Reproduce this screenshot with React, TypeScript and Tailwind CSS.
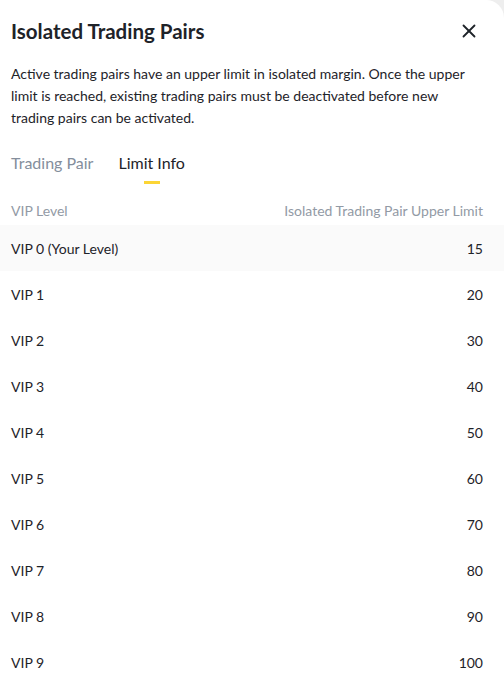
import { X } from "lucide-react";

const rows = [
  { level: "VIP 0 (Your Level)", limit: 15, current: true },
  { level: "VIP 1", limit: 20 },
  { level: "VIP 2", limit: 30 },
  { level: "VIP 3", limit: 40 },
  { level: "VIP 4", limit: 50 },
  { level: "VIP 5", limit: 60 },
  { level: "VIP 6", limit: 70 },
  { level: "VIP 7", limit: 80 },
  { level: "VIP 8", limit: 90 },
  { level: "VIP 9", limit: 100 },
];

export default function App() {
  return (
    <div className="w-[504px] h-[693px] overflow-hidden bg-[#eeeeee] font-['Lato',sans-serif] text-[#1e2329]">
      <div className="h-full bg-white rounded-tr-[18px]">
        <div className="flex items-center justify-between pl-[11px] pr-[24px] pt-[18px]">
          <h1 className="text-[20.5px] font-bold leading-[26px]">Isolated Trading Pairs</h1>
          <X className="w-[22px] h-[22px] text-[#1e2329]" strokeWidth={2} />
        </div>

        <p className="mt-[19px] pl-[11px] pr-[30px] text-[14px] leading-[22px] text-[#1e2329]">
          Active trading pairs have an upper limit in isolated margin. Once the upper limit is reached, existing trading
          pairs must be deactivated before new trading pairs can be activated.
        </p>

        <div className="flex gap-[25px] pl-[11px] mt-[24px]">
          <div className="text-[16px] leading-[20px] text-[#848e9c]">Trading Pair</div>
          <div className="flex flex-col items-center">
            <div className="text-[16px] leading-[20px] text-[#1e2329]">Limit Info</div>
            <div className="mt-[8px] w-[16px] h-[3px] bg-[#fcd535]" />
          </div>
        </div>

        <div className="flex justify-between pl-[11px] pr-[21px] mt-[18px] text-[14px] leading-[18px] text-[#929aa5]">
          <span>VIP Level</span>
          <span>Isolated Trading Pair Upper Limit</span>
        </div>

        <div className="mt-[5px]">
          {rows.map((r) => (
            <div
              key={r.level}
              className={`flex items-center justify-between h-[46px] pl-[11px] pr-[21px] text-[14px] ${
                r.current ? "bg-[#fafafa]" : ""
              }`}
            >
              <span>{r.level}</span>
              <span>{r.limit}</span>
            </div>
          ))}
        </div>
      </div>
    </div>
  );
}
